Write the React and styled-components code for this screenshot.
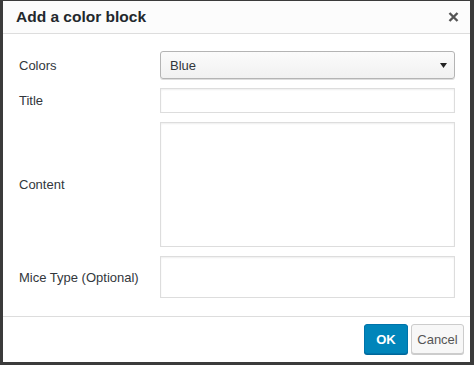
import styled, { createGlobalStyle } from 'styled-components';

const GlobalStyle = createGlobalStyle`
  html, body {
    margin: 0;
    padding: 0;
    background: #3b3b3b;
  }
  body {
    font-family: "Liberation Sans", Arial, sans-serif;
    color: #23282d;
  }
`;

const Backdrop = styled.div`
  width: 474px;
  height: 365px;
  padding: 1px 4px 3px 3px;
  box-sizing: border-box;
  background: #3b3b3b;
`;

const Dialog = styled.div`
  width: 100%;
  height: 100%;
  background: #fff;
  display: flex;
  flex-direction: column;
`;

const Header = styled.div`
  height: 32px;
  border-bottom: 1px solid #dddddd;
  background: #fcfcfc;
  display: flex;
  align-items: center;
  justify-content: space-between;
  padding: 0 9px 0 13px;
`;

const Title = styled.h1`
  margin: 0;
  font-size: 15.5px;
  font-weight: 700;
  color: #23282d;
`;

const Close = styled.button`
  border: 0;
  background: none;
  padding: 0;
  width: 16px;
  height: 16px;
  display: flex;
  align-items: center;
  justify-content: center;
  cursor: pointer;
`;

const Body = styled.div`
  flex: 1;
  display: grid;
  grid-template-columns: 141px 295px;
  row-gap: 9px;
  padding: 17px 15px 17px 16px;
  align-items: center;
  align-content: start;
  border-bottom: 1px solid #dddddd;
`;

const Label = styled.label`
  font-size: 13px;
  color: #32373c;
`;

const Select = styled.div`
  height: 28px;
  box-sizing: border-box;
  border: 1px solid #b4b4b4;
  border-radius: 3px;
  background: linear-gradient(#fbfbfb, #f1f1f1);
  box-shadow: 0 1px 0 #ddd;
  display: flex;
  align-items: center;
  justify-content: space-between;
  padding: 0 7px 0 9px;
  font-size: 13px;
  color: #32373c;
`;

const Field = styled.div`
  height: ${(p) => p.$h}px;
  box-sizing: border-box;
  border: 1px solid #dddddd;
  box-shadow: inset 0 1px 2px rgba(0, 0, 0, 0.07);
  background: #fff;
`;

const Footer = styled.div`
  height: 45px;
  display: flex;
  justify-content: flex-end;
  align-items: flex-start;
  gap: 3px;
  padding: 7px 6px 0 0;
  box-sizing: border-box;
`;

const Button = styled.button`
  height: 30px;
  width: ${(p) => (p.$primary ? '44px' : '53px')};
  box-sizing: border-box;
  border-radius: 3px;
  font-family: "Liberation Sans", Arial, sans-serif;
  font-size: 13px;
  padding: 0;
  cursor: pointer;
  border: 1px solid ${(p) => (p.$primary ? '#0073aa' : '#cccccc')};
  background: ${(p) => (p.$primary ? '#0085ba' : '#f7f7f7')};
  color: ${(p) => (p.$primary ? '#ffffff' : '#555555')};
  font-weight: ${(p) => (p.$primary ? 700 : 400)};
  box-shadow: ${(p) => (p.$primary ? '0 1px 0 #006799' : '0 1px 0 #cccccc')};
`;

const rows = [
  { label: 'Title', h: 25 },
  { label: 'Content', h: 125 },
  { label: 'Mice Type (Optional)', h: 42 },
];

export default function App() {
  return (
    <>
      <GlobalStyle />
      <Backdrop>
        <Dialog>
          <Header>
            <Title>Add a color block</Title>
            <Close aria-label="Close">
              <svg width="11" height="10" viewBox="0 0 11 10">
                <path d="M1.5 1 L9.5 9 M9.5 1 L1.5 9" stroke="#555" strokeWidth="2.4" />
              </svg>
            </Close>
          </Header>
          <Body>
            <Label>Colors</Label>
            <Select>
              Blue
              <svg width="7" height="5" viewBox="0 0 7 5">
                <path d="M0 0 L7 0 L3.5 5 Z" fill="#222" />
              </svg>
            </Select>
            {rows.map((r) => (
              <>
                <Label key={r.label}>{r.label}</Label>
                <Field $h={r.h} />
              </>
            ))}
          </Body>
          <Footer>
            <Button $primary>OK</Button>
            <Button>Cancel</Button>
          </Footer>
        </Dialog>
      </Backdrop>
    </>
  );
}
